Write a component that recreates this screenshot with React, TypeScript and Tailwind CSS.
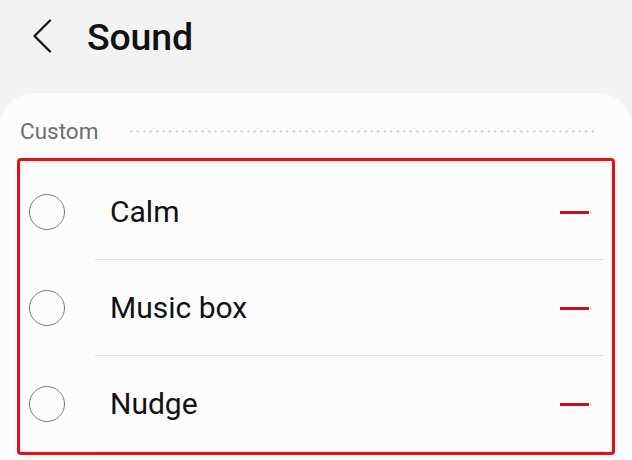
import { ReactNode } from "react";

type Tone = { name: string };

const tones: Tone[] = [{ name: "Calm" }, { name: "Music box" }, { name: "Nudge" }];

function BackIcon() {
  return (
    <svg width="20" height="34" viewBox="0 0 20 34" fill="none">
      <path d="M18 1.5 L2.5 17 L18 32.5" stroke="#111" strokeWidth="2.2" strokeLinecap="round" strokeLinejoin="round" />
    </svg>
  );
}

function Row({ children }: { children: ReactNode }) {
  return <div className="flex h-[96px] items-center">{children}</div>;
}

export default function App() {
  return (
    <div className="h-[460px] w-[632px] overflow-hidden bg-[#f3f3f3] font-['Roboto',sans-serif]">
      {/* header */}
      <div className="flex h-[93px] items-start pt-[18px]">
        <div className="ml-[32px] mt-[1px]">
          <BackIcon />
        </div>
        <h1 className="ml-[35px] mt-[1px] text-[37.5px] font-medium leading-[36px] tracking-[-0.2px] text-[#111]">Sound</h1>
      </div>

      {/* card */}
      <div className="h-[367px] rounded-t-[34px] bg-[#fcfcfc] pt-[25px]">
        <div className="flex items-center pl-[20px] pr-[34px]">
          <span className="text-[22.5px] leading-[26px] text-[#6e6e6e]">Custom</span>
          <div className="ml-[30px] h-[3px] flex-1 bg-[radial-gradient(circle,#d2d2d2_1px,transparent_1.4px)] bg-[length:6.5px_3px]" />
        </div>

        <div className="ml-[17px] mt-[14px] w-[598px] rounded-[4px] border-[3px] border-[#e3101c] pt-[3px] shadow-[inset_0_0_3px_rgba(0,0,0,0.12)]">
          {tones.map((t) => (
            <div key={t.name} className="relative">
              <Row>
                <div className="ml-[9px] h-[36px] w-[36px] rounded-full border-[1.5px] border-[#7a7a7a]" />
                <span className="ml-[45px] text-[30px] leading-[34px] text-[#111]">{t.name}</span>
                <div className="ml-auto mr-[23px] h-[3px] w-[29px] bg-[#c8101c]" />
              </Row>
              <div className="absolute bottom-0 left-[75px] right-[9px] h-px bg-[#e0e0e0]" />
            </div>
          ))}
        </div>
      </div>
    </div>
  );
}
